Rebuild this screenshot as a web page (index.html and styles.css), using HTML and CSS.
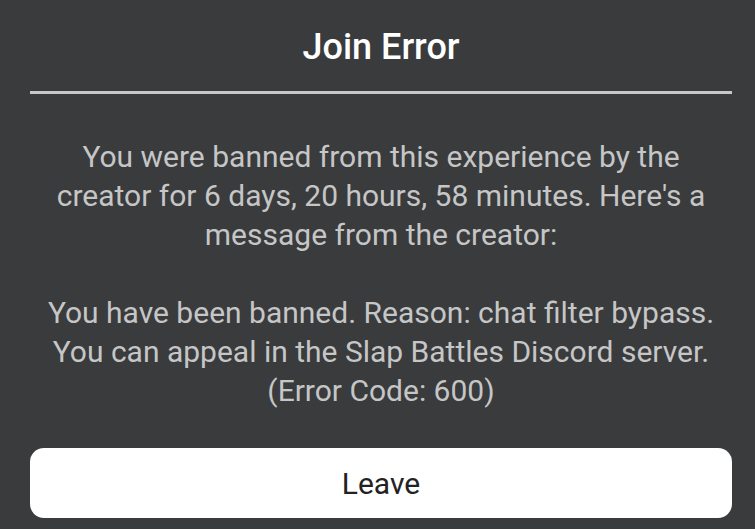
FILE: index.html
```html
<!DOCTYPE html>
<html lang="en">
<head>
    <meta charset="UTF-8">
    <title>Join Error</title>
    <link rel="stylesheet" href="styles.css">
</head>
<body>
    <div class="dialog">
        <h1 class="title">Join Error</h1>
        <div class="divider"></div>
        <p class="message">You were banned from this experience by the creator for 6 days, 20 hours, 58 minutes. Here's a message from the creator:</p>
        <p class="message">You have been banned. Reason: chat filter bypass. You can appeal in the Slap Battles Discord server.<br>(Error Code: 600)</p>
        <button class="leave-btn">Leave</button>
    </div>
</body>
</html>
```

FILE: styles.css
```css
body {
    margin: 0;
    background-color: #393b3d;
    font-family: 'Roboto', 'Open Sans', sans-serif;
    height: 529px;
    overflow: hidden;
}

.dialog {
    padding: 0 23px 0 30px;
    display: flex;
    flex-direction: column;
}

.title {
    margin: 27px 0 0;
    text-align: center;
    color: #ffffff;
    font-size: 36px;
    font-weight: 500;
    line-height: 40px;
}

.divider {
    margin-top: 24px;
    height: 3px;
    background-color: #c8c8c8;
}

.message {
    margin: 43px 6px 0;
    text-align: center;
    color: #c6c6c6;
    font-size: 30px;
    line-height: 39px;
}

.message + .message {
    margin-top: 39px;
}

.leave-btn {
    margin-top: 38px;
    height: 70px;
    background-color: #ffffff;
    border: none;
    border-radius: 14px;
    color: #222222;
    font-family: 'Roboto', 'Open Sans', sans-serif;
    font-size: 30px;
}
```
